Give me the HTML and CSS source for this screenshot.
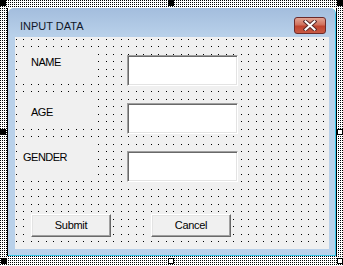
FILE: index.html
```html
<!doctype html>
<html lang="en">
  <head>
    <meta charset="UTF-8" />
    <title>INPUT DATA</title>
    <link rel="stylesheet" href="styles.css">
  </head>
  <body>
    <div class="designer">
      <div class="frame">
        <div class="form-window">
          <div class="titlebar">
            <span class="title">INPUT DATA</span>
            <div class="close-btn">
              <svg width="14" height="11" viewBox="0 0 14 11">
                <path d="M2.5 1.5 L11.5 9.5 M11.5 1.5 L2.5 9.5" stroke="#5a2a2a" stroke-width="4" stroke-linecap="square" />
                <path d="M2.5 1.5 L11.5 9.5 M11.5 1.5 L2.5 9.5" stroke="#fff" stroke-width="2" stroke-linecap="square" />
              </svg>
            </div>
          </div>
          <div class="client">
            <div class="row">
              <div class="label label-name">NAME</div>
              <div class="textbox"></div>
            </div>
            <div class="row">
              <div class="label label-age">AGE</div>
              <div class="textbox"></div>
            </div>
            <div class="row">
              <div class="label label-gender">GENDER</div>
              <div class="textbox"></div>
            </div>
            <div class="buttons">
              <div class="btn">Submit</div>
              <div class="btn">Cancel</div>
            </div>
          </div>
        </div>
      </div>
      <!-- selection handles -->
      <span class="handle dark h-tl"></span>
      <span class="handle dark h-tm"></span>
      <span class="handle dark h-tr"></span>
      <span class="handle dark h-ml"></span>
      <span class="handle light h-mr"></span>
      <span class="handle dark h-bl"></span>
      <span class="handle light h-bm"></span>
      <span class="handle light h-br"></span>
    </div>
  </body>
</html>
```

FILE: styles.css
```css
body {
  margin: 0;
  font-family: "Liberation Sans", Arial, sans-serif;
  background: #fff;
}
.designer {
  position: relative;
  width: 343px;
  height: 266px;
  box-sizing: border-box;
  padding: 8px 6px 10px 7px;
  background-color: #fff;
  background-image: conic-gradient(from 270deg at 1px 1px, #000 90deg, transparent 0);
  background-size: 2px 2px;
}
.frame {
  height: 100%;
  border-left: 1px solid #000;
  border-right: 1px solid #000;
  background: #fff;
}
.form-window {
  height: 100%;
  box-sizing: border-box;
  display: flex;
  flex-direction: column;
  background: #b9d1ea;
  border-right: 1px solid #33c6ea;
  border-bottom: 1px solid #33c6ea;
  border-radius: 6px 6px 0 0;
  padding: 0 6px 6px 7px;
}
.titlebar {
  height: 29px;
  margin: 0 -6px 0 -7px;
  padding: 0 9px 0 12px;
  display: flex;
  align-items: flex-start;
  justify-content: space-between;
  border-radius: 6px 6px 0 0;
  background: linear-gradient(#a3bddd, #b9d1ea);
}
.title {
  margin-top: 12px;
  font-size: 11px;
  line-height: 13px;
  color: #101828;
}
.close-btn {
  margin-top: 9px;
  width: 30px;
  height: 15px;
  border: 1px solid #6b2a2a;
  border-radius: 3px;
  background: linear-gradient(#e3a595, #d0705c 45%, #c0432e 55%, #c85a44);
  display: flex;
  align-items: center;
  justify-content: center;
}
.client {
  flex: 1;
  background-color: #f0f0f0;
  background-image:
    conic-gradient(from 270deg at 1px 1px, #000 90deg, transparent 0),
    conic-gradient(from 270deg at 1px 1px, #000 90deg, transparent 0),
    conic-gradient(from 270deg at 1px 1px, #000 90deg, transparent 0),
    conic-gradient(from 270deg at 1px 1px, #000 90deg, transparent 0);
  background-size: 15px 15px;
  background-position: 1px 2px, 8px 2px, 1px 9px, 8px 9px;
  padding-top: 18px;
  display: flex;
  flex-direction: column;
  gap: 17px;
}
.row {
  display: flex;
  height: 31px;
}
.label {
  box-sizing: border-box;
  background: #f0f0f0;
  font-size: 11px;
  line-height: 13px;
  letter-spacing: -0.5px;
  color: #000;
}
.label-name {
  margin: -6px 31px 0 8px;
  width: 73px;
  height: 28px;
  padding: 7px 0 0 8px;
}
.label-age {
  margin: -7px 31px 0 8px;
  width: 73px;
  height: 30px;
  padding: 10px 0 0 8px;
}
.label-gender {
  margin: -9px 31px 0 3px;
  width: 78px;
  height: 36px;
  padding: 9px 0 0 5px;
}
.textbox {
  width: 111px;
  height: 31px;
  box-sizing: border-box;
  background: #fff;
  border: 1px solid;
  border-color: #a0a0a0 #fff #fff #a0a0a0;
  box-shadow: inset 1px 1px 0 #696969, inset -1px -1px 0 #e3e3e3;
}
.buttons {
  margin-top: 15px;
  padding-left: 16px;
  display: flex;
  gap: 40px;
}
.btn {
  width: 80px;
  height: 23px;
  box-sizing: border-box;
  background: #f0f0f0;
  border: 1px solid;
  border-color: #fff #696969 #696969 #fff;
  box-shadow: inset -1px -1px 0 #a0a0a0, inset 1px 1px 0 #e3e3e3;
  font-size: 11px;
  line-height: 21px;
  letter-spacing: -0.3px;
  text-align: center;
  color: #000;
}
.handle {
  position: absolute;
  width: 6px;
  height: 6px;
  box-sizing: border-box;
  border: 1px solid #000;
}
.dark {
  background: #000;
}
.light {
  background: #fff;
}
.h-tl { left: 0; top: 0; }
.h-tm { left: 168px; top: 0; }
.h-tr { left: 337px; top: 0; }
.h-ml { left: 0; top: 129px; }
.h-mr { left: 337px; top: 129px; }
.h-bl { left: 1px; top: 258px; }
.h-bm { left: 168px; top: 258px; }
.h-br { left: 337px; top: 258px; }
```
